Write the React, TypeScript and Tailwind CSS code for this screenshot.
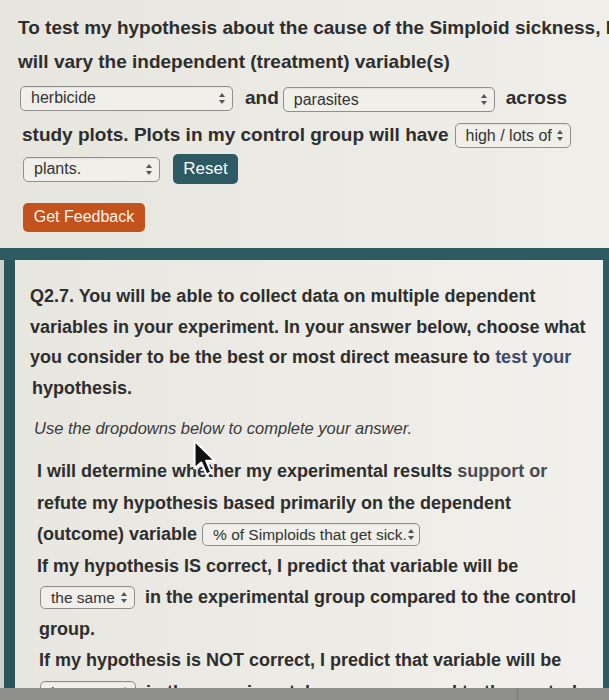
import React from "react";

function Arrows() {
  return (
    <svg width="8" height="13" viewBox="0 0 8 13" className="shrink-0">
      <path d="M4 1 L7 5 L1 5 Z" fill="#555" />
      <path d="M4 12 L7 8 L1 8 Z" fill="#555" />
    </svg>
  );
}

function Sel({ label, className }: { label: string; className: string }) {
  return (
    <span
      className={
        "inline-flex items-center justify-between border border-[#8e8e8c] rounded-[5px] bg-[#f0efea] pl-[10px] pr-[6px] font-normal leading-none text-[#333] shadow-[inset_0_1px_1px_rgba(0,0,0,0.06)] " +
        className
      }
    >
      <span className="whitespace-nowrap">{label}</span>
      <Arrows />
    </span>
  );
}

function Cursor() {
  return (
    <svg
      width="24"
      height="38"
      viewBox="0 0 16 25"
      className="absolute left-[193px] top-[439px]"
    >
      <path
        d="M1 1 L1 19.5 L5.5 15.5 L9 23.5 L12.2 22.2 L8.8 14.3 L14.6 14.3 Z"
        fill="#111"
        stroke="#fff"
        strokeWidth="1.4"
        strokeLinejoin="round"
      />
    </svg>
  );
}

export default function App() {
  return (
    <div className="relative w-[609px] h-[700px] overflow-hidden bg-[#2e5a61] flex flex-col font-['Liberation_Sans',Arial,sans-serif] text-[#2e2e2e]">
      {/* Top panel */}
      <div className="h-[248px] shrink-0 bg-linear-to-r from-[#e6e5de] to-[#efeee9] pl-[18px] pt-[11px] font-bold text-[19px]">
        <div className="h-[34px] flex items-center whitespace-nowrap">
          To test my hypothesis about the cause of the Simploid sickness, I
        </div>
        <div className="h-[34px] flex items-center whitespace-nowrap">
          will vary the independent (treatment) variable(s)
        </div>
        <div className="h-[38px] flex items-center whitespace-nowrap pl-[2px]">
          <Sel label="herbicide" className="w-[213px] h-[25px] text-[16px]" />
          <span className="ml-[12px]">and</span>
          <Sel label="parasites" className="ml-[4px] w-[212px] h-[25px] mt-[3px] text-[16px]" />
          <span className="ml-[11px]">across</span>
        </div>
        <div className="h-[36px] flex items-center whitespace-nowrap pl-[4px]">
          <span>study plots. Plots in my control group will have</span>
          <Sel label="high / lots of" className="ml-[6px] w-[116px] h-[25px] mt-[1px] text-[16px]" />
        </div>
        <div className="h-[32px] flex items-center whitespace-nowrap pl-[5px]">
          <Sel label="plants." className="w-[137px] h-[25px] text-[16px]" />
          <button className="ml-[13px] w-[65px] h-[30px] rounded-[5px] bg-[#2d5963] text-white font-normal text-[17px]">
            Reset
          </button>
        </div>
        <div className="mt-[17px] pl-[5px]">
          <button className="w-[122px] h-[29px] rounded-[5px] bg-[#c4521c] text-[#fdf3ec] font-normal text-[16px]">
            Get Feedback
          </button>
        </div>
      </div>

      {/* teal gap */}
      <div className="h-[12px] shrink-0" />

      {/* Bottom panel */}
      <div className="flex-1 flex min-h-0">
        <div className="w-[4px] bg-[#cfcfca]" />
        <div className="w-[11px] bg-[#2b555c]" />
        <div className="flex-1 bg-linear-to-r from-[#e7e6df] to-[#f1f0ec] pl-[15px] pt-[21px] overflow-hidden">
          <div className="font-bold text-[18px] leading-[30.5px] whitespace-nowrap">
            <div>Q2.7. You will be able to collect data on multiple dependent</div>
            <div>variables in your experiment. In your answer below, choose what</div>
            <div>
              you consider to be the best or most direct measure to{" "}
              <span className="text-[#3b4a69]">test your</span>
            </div>
            <div className="pl-[2px]">hypothesis.</div>
          </div>
          <div className="mt-[13px] pl-[4px] italic text-[16.5px] leading-[24px] text-[#3a3a3a]">
            Use the dropdowns below to complete your answer.
          </div>
          <div className="mt-[16px] pl-[7px] font-bold text-[18px] whitespace-nowrap">
            <div className="h-[31.5px] flex items-center">
              I will determine whether my experimental results{" "}
              <span className="ml-[5px] text-[#4a4a50]">support or</span>
            </div>
            <div className="h-[31.5px] flex items-center">
              refute my hypothesis based primarily on the dependent
            </div>
            <div className="h-[31.5px] flex items-center">
              <span>(outcome) variable</span>
              <Sel label="% of Simploids that get sick." className="ml-[5px] w-[218px] h-[23px] text-[15.5px]" />
            </div>
            <div className="h-[31.5px] flex items-center">
              If my hypothesis IS correct, I predict that variable will be
            </div>
            <div className="h-[31.5px] flex items-center">
              <Sel label="the same" className="w-[95px] h-[23px] ml-[3px] text-[15.5px]" />
              <span className="ml-[10px]">
                in the experimental group compared to the control
              </span>
            </div>
            <div className="h-[31.5px] flex items-center pl-[2px]">group.</div>
            <div className="h-[31.5px] flex items-center pl-[2px]">
              If my hypothesis is NOT correct, I predict that variable will be
            </div>
            <div className="h-[31.5px] flex items-center">
              <Sel label="lower" className="w-[96px] h-[23px] ml-[3px] text-[15.5px]" />
              <span className="ml-[10px]">
                in the experimental group compared to the control
              </span>
            </div>
          </div>
        </div>
        <div className="w-[6px] bg-[#2e5a61]" />
      </div>

      {/* bottom gray bar */}
      <div className="h-[12px] shrink-0 bg-[#8e8e8b] flex">
        <div className="w-[518px] border-r border-[#7a7a78]" />
      </div>

      <Cursor />
    </div>
  );
}
